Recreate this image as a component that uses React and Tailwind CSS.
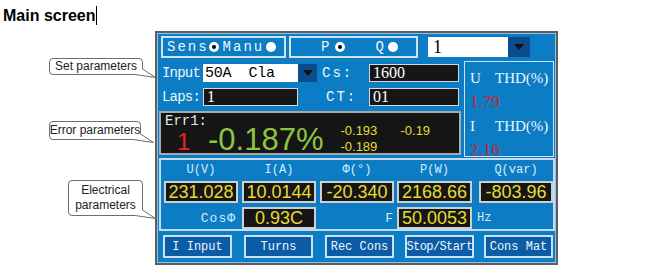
import React from "react";

const MONO = "font-['Liberation_Mono',monospace]";
const SANS = "font-['Liberation_Sans',Arial,sans-serif]";
const SERIF = "font-['Liberation_Serif',serif]";

function Callout({ w, h, lines, className }) {
  const W = w;
  const H = h;
  const d = `M4,0.5 H${W - 4} Q${W - 0.5},0.5 ${W - 0.5},4 V${H - 6} L${W + 12.5},${H + 2.5} L${W - 8},${H - 0.5} H4 Q0.5,${H - 0.5} 0.5,${H - 4} V4 Q0.5,0.5 4,0.5 Z`;
  return (
    <div className={`relative ${className}`} style={{ width: W + 13, height: H + 3 }}>
      <svg className="absolute left-0 top-0" width={W + 13} height={H + 3}>
        <path d={d} fill="white" stroke="#6e6e6e" strokeWidth="1" />
      </svg>
      <div
        className={`relative flex flex-col items-center justify-center text-[12px] leading-[15px] text-[#222] ${SANS}`}
        style={{ width: W, height: H }}
      >
        {lines.map((l) => (
          <span key={l}>{l}</span>
        ))}
      </div>
    </div>
  );
}

function Radio({ on }) {
  return (
    <span className="w-[10px] h-[10px] rounded-full bg-white flex items-center justify-center shrink-0">
      {on && <span className="w-[4px] h-[4px] rounded-full bg-black" />}
    </span>
  );
}

function Arrow({ w, h }) {
  return (
    <span className={`${w} ${h} bg-[#0b4b8e] flex items-center justify-center shrink-0`}>
      <svg width="10" height="6" viewBox="0 0 10 6">
        <path d="M0,0 H10 L5,6 Z" fill="#111" />
      </svg>
    </span>
  );
}

function BlackBox({ w, children }) {
  return (
    <div className={`${w} h-[18px] bg-[#161616] border border-[#d8d8d8] flex items-center pl-[3px] text-[16px] leading-none text-white ${SERIF}`}>
      {children}
    </div>
  );
}

function ValBox({ w, children }) {
  return (
    <div className={`${w} h-[22px] bg-[#161616] border-2 border-[#cfcfcf] flex items-center justify-center text-[18px] leading-none text-[#e6dc30] ${SANS}`}>
      {children}
    </div>
  );
}

function Btn({ ml, children, tight }) {
  return (
    <div className={`${ml} w-[69px] h-[23px] bg-[#0b5ca6] border-2 border-[#c9e1f2] flex items-center justify-center text-[12px] leading-none text-[#eef6fc] whitespace-nowrap ${tight ? "tracking-[-0.6px]" : ""} ${MONO}`}>
      {children}
    </div>
  );
}

export default function App() {
  const lbl = `text-[14px] leading-none text-[#eef6fc] ${MONO}`;
  return (
    <div className={`w-[650px] h-[273px] bg-white overflow-hidden ${SANS}`}>
      <div className="flex items-center h-[31px] pl-[3px]">
        <span className="text-[16px] font-bold text-black leading-none">Main screen</span>
        <span className="w-[1px] h-[19px] bg-black ml-[1px]" />
      </div>
      <div className="flex">
        <div className="w-[155px] flex flex-col shrink-0">
          <Callout className="mt-[27px] ml-[49px]" w={94} h={17} lines={["Set parameters"]} />
          <Callout className="mt-[43px] ml-[49px]" w={92} h={19} lines={["Error parameters"]} />
          <Callout className="mt-[37px] ml-[68px]" w={75} h={36} lines={["Electrical", "parameters"]} />
        </div>

        <div className="w-[403px] h-[234px] border-2 border-[#5d5d5d] bg-[#0c7cc4] shadow-[inset_0_0_0_1px_#8fc2e6] p-[2px] flex flex-col">
          {/* Row 1 */}
          <div className="flex mt-[1px]">
            <div className="ml-[2px] w-[125px] h-[22px] border-2 border-[#cfe4f3] flex items-center pl-[4px]">
              <span className={`${lbl} tracking-[2px]`}>Sens</span>
              <span className="ml-[0px]"><Radio on /></span>
              <span className={`${lbl} tracking-[2px] ml-[4px]`}>Manu</span>
              <span className="ml-[2px]"><Radio /></span>
            </div>
            <div className="ml-[3px] w-[129px] h-[22px] border-2 border-[#cfe4f3] flex items-center pl-[30px]">
              <span className={lbl}>P</span>
              <span className="ml-[6px]"><Radio on /></span>
              <span className={`${lbl} ml-[30px]`}>Q</span>
              <span className="ml-[4px]"><Radio /></span>
            </div>
            <div className="ml-[10px] mt-[1px] w-[102px] h-[20px] bg-white flex items-center">
              <span className={`flex-1 pl-[5px] text-[18px] leading-none text-black ${SERIF}`}>1</span>
              <Arrow w="w-[22px]" h="h-[20px]" />
            </div>
          </div>

          {/* Middle */}
          <div className="flex mt-[3px]">
            <div className="w-[302px] flex flex-col">
              <div className="flex items-center h-[18px] mt-[3px]">
                <span className={`${lbl} w-[44px] pl-[3px] tracking-[-0.8px]`}>Input</span>
                <div className="w-[95px] h-[18px] bg-white flex items-center pl-[2px]">
                  <span className={`text-[15px] leading-none text-black whitespace-pre tracking-[-0.3px] ${MONO}`}>50A  Cla</span>
                </div>
                <Arrow w="w-[19px]" h="h-[18px]" />
                <span className={`${lbl} w-[52px] pl-[5px] tracking-[2px]`}>Cs:</span>
                <BlackBox w="w-[90px]">1600</BlackBox>
              </div>
              <div className="flex items-center h-[18px] mt-[6px]">
                <span className={`${lbl} w-[44px] pl-[3px] tracking-[-0.8px]`}>Laps:</span>
                <BlackBox w="w-[95px]">1</BlackBox>
                <span className={`${lbl} w-[71px] pl-[28px] tracking-[2px]`}>CT:</span>
                <BlackBox w="w-[90px]">01</BlackBox>
              </div>
              <div className="mt-[5px] h-[44px] w-[302px] bg-[#151515] border-2 border-[#a9a9a9] flex items-start">
                <div className="flex flex-col pl-[4px] w-[47px]">
                  <span className={`text-[14px] leading-[14px] mt-[1px] text-[#e8e8e8] ${MONO}`}>Err1:</span>
                  <span className={`pl-[12px] text-[24px] leading-[24px] mt-[2px] text-[#e3232a] ${SANS}`}>1</span>
                </div>
                <span className={`mt-[11px] text-[31px] leading-[31px] text-[#8cc63f] whitespace-nowrap ${SANS}`}>-0.187%</span>
                <div className={`ml-[17px] mt-[10px] grid grid-cols-[60px_auto] text-[13px] leading-[16px] text-[#e6dc2c] ${SANS}`}>
                  <span>-0.193</span>
                  <span>-0.19</span>
                  <span>-0.189</span>
                </div>
              </div>
            </div>
            <div className={`ml-[3px] w-[90px] h-[96px] border border-[#cfe4f3] flex flex-col pl-[5px] pt-[4px] text-[15px] leading-[24px] ${SERIF}`}>
              <div className="flex text-[#eef6fc]">
                <span className="w-[25px]">U</span>
                <span>THD(%)</span>
              </div>
              <span className="text-[#c8262c] text-[17px]">1.79</span>
              <div className="flex text-[#eef6fc]">
                <span className="w-[25px]">I</span>
                <span>THD(%)</span>
              </div>
              <span className="text-[#c8262c] text-[17px]">2.16</span>
            </div>
          </div>

          {/* Electrical */}
          <div className="mt-[1px] w-[396px] h-[73px] border-2 border-[#c0dcf0] flex flex-col pl-[3px]">
            <div className={`flex h-[19px] items-center text-[12px] leading-none text-[#d9ecf8] ${MONO}`}>
              <span className="w-[74px] text-center">U(V)</span>
              <span className="ml-[4px] w-[74px] text-center">I(A)</span>
              <span className="ml-[4px] w-[74px] text-center">Φ(°)</span>
              <span className="ml-[3px] w-[75px] text-center">P(W)</span>
              <span className="ml-[7px] w-[74px] text-center">Q(var)</span>
            </div>
            <div className="flex mt-[2px]">
              <ValBox w="w-[74px]">231.028</ValBox>
              <div className="ml-[4px]"><ValBox w="w-[74px]">10.0144</ValBox></div>
              <div className="ml-[4px]"><ValBox w="w-[74px]">-20.340</ValBox></div>
              <div className="ml-[3px]"><ValBox w="w-[75px]">2168.66</ValBox></div>
              <div className="ml-[7px]"><ValBox w="w-[74px]">-803.96</ValBox></div>
            </div>
            <div className="flex mt-[4px] items-center">
              <span className={`w-[74px] pr-[2px] text-right text-[13px] tracking-[1px] leading-none text-[#d9ecf8] ${MONO}`}>CosΦ</span>
              <div className="ml-[4px]"><ValBox w="w-[74px]">0.93C</ValBox></div>
              <span className={`ml-[4px] w-[74px] pr-[1px] text-right text-[13px] leading-none text-[#d9ecf8] ${MONO}`}>F</span>
              <div className="ml-[3px]"><ValBox w="w-[75px]">50.0053</ValBox></div>
              <span className={`ml-[5px] text-[12px] leading-none text-[#d9ecf8] ${MONO}`}>Hz</span>
            </div>
          </div>

          {/* Buttons */}
          <div className="flex mt-[4px]">
            <Btn ml="ml-[4px]">I Input</Btn>
            <Btn ml="ml-[12px]">Turns</Btn>
            <Btn ml="ml-[12px]">Rec Cons</Btn>
            <Btn ml="ml-[11px]" tight>Stop/Start</Btn>
            <Btn ml="ml-[10px]">Cons Mat</Btn>
          </div>
        </div>
      </div>
    </div>
  );
}
